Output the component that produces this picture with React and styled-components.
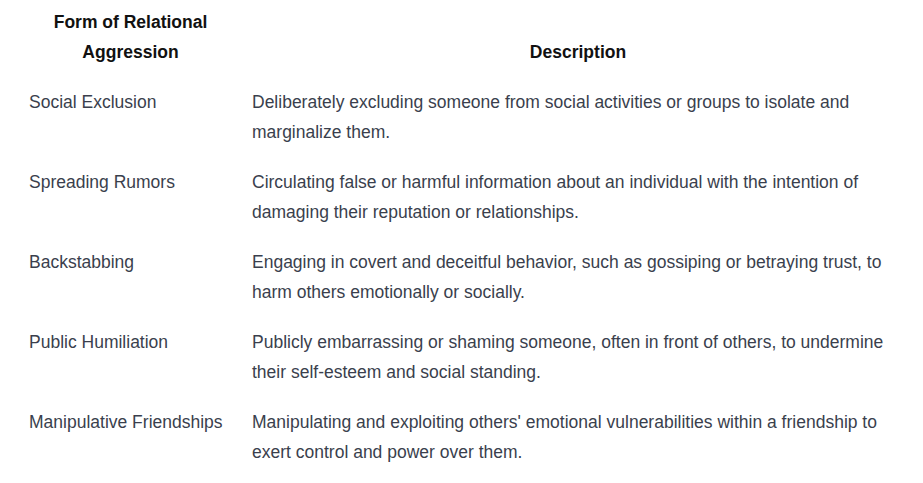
import styled, { createGlobalStyle } from 'styled-components';

const GlobalStyle = createGlobalStyle`
  body {
    margin: 0;
    background: #ffffff;
    font-family: "Liberation Sans", Arial, sans-serif;
  }
`;

const rows = [
  {
    form: 'Social Exclusion',
    text: 'Deliberately excluding someone from social activities or groups to isolate and marginalize them.',
  },
  {
    form: 'Spreading Rumors',
    text: 'Circulating false or harmful information about an individual with the intention of damaging their reputation or relationships.',
  },
  {
    form: 'Backstabbing',
    text: 'Engaging in covert and deceitful behavior, such as gossiping or betraying trust, to harm others emotionally or socially.',
  },
  {
    form: 'Public Humiliation',
    text: 'Publicly embarrassing or shaming someone, often in front of others, to undermine their self-esteem and social standing.',
  },
  {
    form: 'Manipulative Friendships',
    text: "Manipulating and exploiting others' emotional vulnerabilities within a friendship to exert control and power over them.",
  },
];

const Table = styled.table`
  border-collapse: collapse;
  margin: -3px 11px 0 17px;
  width: 895px;
  table-layout: fixed;
  font-size: 17.5px;
  line-height: 30px;
`;

const Column = styled.col`
  width: ${(p) => p.$width || 'auto'};
`;

const HeadCell = styled.th`
  padding: 10px ${(p) => (p.$first ? '12px 10px 12px' : '8px 10px 8px')};
  color: #111111;
  font-weight: 700;
  text-align: center;
  vertical-align: bottom;
`;

const Cell = styled.td`
  padding: 10px ${(p) => (p.$first ? '12px 10px 12px' : '8px 10px 8px')};
  color: #3a3f4d;
  text-align: left;
  vertical-align: top;
`;

export default function App() {
  return (
    <>
      <GlobalStyle />
      <Table>
        <colgroup>
          <Column $width="227px" />
          <Column />
        </colgroup>
        <thead>
          <tr>
            <HeadCell $first>Form of Relational Aggression</HeadCell>
            <HeadCell>Description</HeadCell>
          </tr>
        </thead>
        <tbody>
          {rows.map((row) => (
            <tr key={row.form}>
              <Cell $first>{row.form}</Cell>
              <Cell>{row.text}</Cell>
            </tr>
          ))}
        </tbody>
      </Table>
    </>
  );
}
